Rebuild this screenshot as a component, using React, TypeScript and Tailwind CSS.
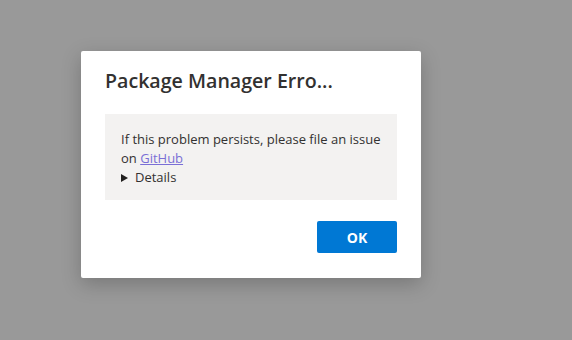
const font = { fontFamily: '"Open Sans", "Noto Sans", sans-serif' };

export default function App() {
  return (
    <div className="flex h-[340px] w-[572px] items-start bg-[#999999] pl-[81px] pt-[51px]" style={font}>
      <div className="flex w-[340px] flex-col rounded-[2px] bg-white shadow-[0_6px_20px_rgba(0,0,0,0.22)]">
        <div className="pb-[19px] pl-[24px] pt-[16px]">
          <h1 className="truncate text-[19.6px] font-semibold leading-7 text-[#323130]">
            Package Manager Erro...
          </h1>
        </div>
        <div className="px-[24px] pb-[25px]">
          <div className="bg-[#f3f2f1] pb-[13px] pl-[16px] pr-[10px] pt-[16px] text-[13px] leading-[19px] text-[#323130]">
            <p>
              If this problem persists, please file an issue on{" "}
              <a className="text-[#7a6fd6] underline">GitHub</a>
            </p>
            <div className="flex items-center gap-[7px]">
              <svg width="7" height="8" viewBox="0 0 7 8" className="shrink-0">
                <path d="M0 0 L7 4 L0 8 Z" fill="#201f1e" />
              </svg>
              <span>Details</span>
            </div>
          </div>
          <div className="mt-[21px] flex justify-end">
            <button className="h-[32px] w-[80px] rounded-[2px] bg-[#0078d4] text-[14px] font-bold text-white">
              OK
            </button>
          </div>
        </div>
      </div>
    </div>
  );
}
